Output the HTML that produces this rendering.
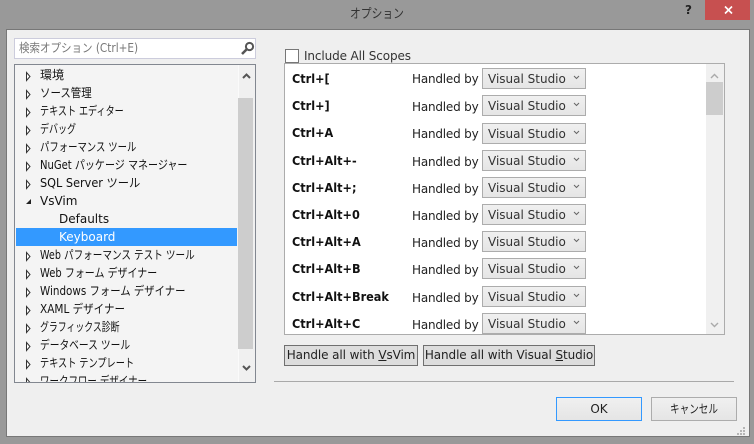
<!DOCTYPE html>
<html><head><meta charset="utf-8">
<style>
html,body{margin:0;padding:0}
body{width:754px;height:444px;overflow:hidden;position:relative;background:#999;font:12px/18px "DejaVu Sans","WenQuanYi Zen Hei","Noto Sans CJK JP",sans-serif;color:#1e1e1e}
div{position:absolute;box-sizing:border-box;white-space:nowrap}
svg{position:absolute;overflow:visible}
.t{left:0;width:221px;height:18px}
.t svg{left:10px;top:5px}
.t span{position:absolute;left:24px;top:-1px;transform-origin:0 50%;color:#111}
.k{left:7px;font-weight:bold;color:#111;font-size:12px;height:18px;line-height:18px;transform:scaleX(.94);transform-origin:0 50%}
.h{left:127px;height:18px;line-height:18px;color:#222;letter-spacing:-.2px}
.c{left:197px;width:104px;height:21px;border:1px solid #acacac;background:linear-gradient(#f0f0f0,#e5e5e5);padding-left:5px;line-height:21px;color:#333}
.c svg{left:90px;top:6px}
.b{border:1px solid #707070;background:#ddd;line-height:18px;text-align:center;color:#222;letter-spacing:-.1px}
.s{display:inline-block;transform:scaleX(.8)}
</style></head><body>
<div style="left:340px;top:6px;width:74px;text-align:center;color:#333;font-size:13px;transform:scaleX(.83)">オプション</div>
<div style="left:685px;top:1px;font-weight:bold;color:#222;font-size:12px">?</div>
<div style="left:705px;top:0;width:45px;height:20px;background:#c75050"></div>
<svg style="left:724px;top:6px" width="9" height="8"><path d="M1 .5l7 7M8 .5l-7 7" stroke="#fff" stroke-width="1.6"/></svg>
<div style="left:6px;top:29px;width:744px;height:408px;border:1px solid #777;background:#efefef"></div>

<div style="left:14px;top:38px;width:242px;height:21px;border:1px solid #ccccdc;background:#fff"></div>
<div style="left:19px;top:39px;color:#777;line-height:19px;transform:scaleX(.875);transform-origin:0 50%">検索オプション (Ctrl+E)</div>
<svg style="left:240px;top:41px" width="15" height="15"><circle cx="9.5" cy="5.5" r="3.6" fill="none" stroke="#555" stroke-width="2"/><path d="M7 8l-5 5" stroke="#555" stroke-width="2.6"/></svg>

<div style="left:14px;top:64px;width:242px;height:319px;border:1px solid #828790;background:#f4f4f4;overflow:hidden">
 <div style="left:1px;top:0;width:222px;height:317px">
  <div class="t" style="top:2px"><svg width="6" height="10"><path d="M.5 .5l3.5 4-3.5 4z" fill="#fff" stroke="#333"/></svg><span>環境</span></div>
  <div class="t" style="top:20px"><svg width="6" height="10"><path d="M.5 .5l3.5 4-3.5 4z" fill="#fff" stroke="#333"/></svg><span style="transform:scaleX(.87)">ソース管理</span></div>
  <div class="t" style="top:38px"><svg width="6" height="10"><path d="M.5 .5l3.5 4-3.5 4z" fill="#fff" stroke="#333"/></svg><span style="transform:scaleX(.757)">テキスト エディター</span></div>
  <div class="t" style="top:56px"><svg width="6" height="10"><path d="M.5 .5l3.5 4-3.5 4z" fill="#fff" stroke="#333"/></svg><span style="transform:scaleX(.75)">デバッグ</span></div>
  <div class="t" style="top:74px"><svg width="6" height="10"><path d="M.5 .5l3.5 4-3.5 4z" fill="#fff" stroke="#333"/></svg><span style="transform:scaleX(.78)">パフォーマンス ツール</span></div>
  <div class="t" style="top:92px"><svg width="6" height="10"><path d="M.5 .5l3.5 4-3.5 4z" fill="#fff" stroke="#333"/></svg><span style="transform:scaleX(.835)">NuGet パッケージ マネージャー</span></div>
  <div class="t" style="top:110px"><svg width="6" height="10"><path d="M.5 .5l3.5 4-3.5 4z" fill="#fff" stroke="#333"/></svg><span style="transform:scaleX(.94)">SQL Server ツール</span></div>
  <div class="t" style="top:128px"><svg width="6" height="10"><path d="M0 6h5v-5z" fill="#222"/></svg><span>VsVim</span></div>
  <div class="t" style="top:146px"><span style="left:43px">Defaults</span></div>
  <div class="t" style="top:163px;background:#3399ff"><span style="left:43px;top:0;color:#fff">Keyboard</span></div>
  <div class="t" style="top:182px"><svg width="6" height="10"><path d="M.5 .5l3.5 4-3.5 4z" fill="#fff" stroke="#333"/></svg><span style="transform:scaleX(.8)">Web パフォーマンス テスト ツール</span></div>
  <div class="t" style="top:200px"><svg width="6" height="10"><path d="M.5 .5l3.5 4-3.5 4z" fill="#fff" stroke="#333"/></svg><span style="transform:scaleX(.83)">Web フォーム デザイナー</span></div>
  <div class="t" style="top:218px"><svg width="6" height="10"><path d="M.5 .5l3.5 4-3.5 4z" fill="#fff" stroke="#333"/></svg><span style="transform:scaleX(.863)">Windows フォーム デザイナー</span></div>
  <div class="t" style="top:236px"><svg width="6" height="10"><path d="M.5 .5l3.5 4-3.5 4z" fill="#fff" stroke="#333"/></svg><span style="transform:scaleX(.876)">XAML デザイナー</span></div>
  <div class="t" style="top:254px"><svg width="6" height="10"><path d="M.5 .5l3.5 4-3.5 4z" fill="#fff" stroke="#333"/></svg><span style="transform:scaleX(.74)">グラフィックス診断</span></div>
  <div class="t" style="top:272px"><svg width="6" height="10"><path d="M.5 .5l3.5 4-3.5 4z" fill="#fff" stroke="#333"/></svg><span style="transform:scaleX(.81)">データベース ツール</span></div>
  <div class="t" style="top:290px"><svg width="6" height="10"><path d="M.5 .5l3.5 4-3.5 4z" fill="#fff" stroke="#333"/></svg><span style="transform:scaleX(.764)">テキスト テンプレート</span></div>
  <div class="t" style="top:308px"><svg width="6" height="10"><path d="M.5 .5l3.5 4-3.5 4z" fill="#fff" stroke="#333"/></svg><span style="transform:scaleX(.79)">ワークフロー デザイナー</span></div>
 </div>
 <div style="left:223px;top:0;width:18px;height:317px;background:#f0f0f0;border-left:1px solid #fafafa"></div>
 <div style="left:223px;top:33px;width:15px;height:251px;background:#cdcdcd"></div>
 <svg style="left:227px;top:8px" width="9" height="6"><path d="M1 5l3.5-3.5L8 5" fill="none" stroke="#555" stroke-width="2"/></svg>
 <svg style="left:227px;top:300px" width="9" height="6"><path d="M1 1l3.5 3.5L8 1" fill="none" stroke="#555" stroke-width="2"/></svg>
</div>

<div style="left:285px;top:49px;width:14px;height:14px;border:1px solid #777;background:#fff"></div>
<div style="left:304px;top:47px;color:#333;letter-spacing:-.12px">Include All Scopes</div>

<div style="left:284px;top:63px;width:441px;height:272px;border:1px solid #acacac;background:#fff;overflow:hidden">
 <div class="k" style="top:6px">Ctrl+[</div><div class="h" style="top:6px">Handled by</div><div class="c" style="top:4px">Visual Studio<svg width="7" height="5"><path d="M1 1l2.5 2.5L6 1" fill="none" stroke="#666"/></svg></div>
 <div class="k" style="top:33px">Ctrl+]</div><div class="h" style="top:34px">Handled by</div><div class="c" style="top:31px">Visual Studio<svg width="7" height="5"><path d="M1 1l2.5 2.5L6 1" fill="none" stroke="#666"/></svg></div>
 <div class="k" style="top:60px">Ctrl+A</div><div class="h" style="top:61px">Handled by</div><div class="c" style="top:59px">Visual Studio<svg width="7" height="5"><path d="M1 1l2.5 2.5L6 1" fill="none" stroke="#666"/></svg></div>
 <div class="k" style="top:88px">Ctrl+Alt+-</div><div class="h" style="top:89px">Handled by</div><div class="c" style="top:86px">Visual Studio<svg width="7" height="5"><path d="M1 1l2.5 2.5L6 1" fill="none" stroke="#666"/></svg></div>
 <div class="k" style="top:115px">Ctrl+Alt+;</div><div class="h" style="top:116px">Handled by</div><div class="c" style="top:113px">Visual Studio<svg width="7" height="5"><path d="M1 1l2.5 2.5L6 1" fill="none" stroke="#666"/></svg></div>
 <div class="k" style="top:142px">Ctrl+Alt+0</div><div class="h" style="top:143px">Handled by</div><div class="c" style="top:140px">Visual Studio<svg width="7" height="5"><path d="M1 1l2.5 2.5L6 1" fill="none" stroke="#666"/></svg></div>
 <div class="k" style="top:169px">Ctrl+Alt+A</div><div class="h" style="top:170px">Handled by</div><div class="c" style="top:167px">Visual Studio<svg width="7" height="5"><path d="M1 1l2.5 2.5L6 1" fill="none" stroke="#666"/></svg></div>
 <div class="k" style="top:196px">Ctrl+Alt+B</div><div class="h" style="top:197px">Handled by</div><div class="c" style="top:194px">Visual Studio<svg width="7" height="5"><path d="M1 1l2.5 2.5L6 1" fill="none" stroke="#666"/></svg></div>
 <div class="k" style="top:224px">Ctrl+Alt+Break</div><div class="h" style="top:225px">Handled by</div><div class="c" style="top:222px">Visual Studio<svg width="7" height="5"><path d="M1 1l2.5 2.5L6 1" fill="none" stroke="#666"/></svg></div>
 <div class="k" style="top:251px">Ctrl+Alt+C</div><div class="h" style="top:252px">Handled by</div><div class="c" style="top:249px">Visual Studio<svg width="7" height="5"><path d="M1 1l2.5 2.5L6 1" fill="none" stroke="#666"/></svg></div>
 <div style="left:421px;top:0;width:18px;height:270px;background:#f0f0f0"></div>
 <div style="left:421px;top:18px;width:17px;height:33px;background:#cdcdcd"></div>
 <svg style="left:425px;top:9px" width="9" height="6"><path d="M1 5l3.5-3.5L8 5" fill="none" stroke="#aaa" stroke-width="1.4"/></svg>
 <svg style="left:425px;top:258px" width="9" height="6"><path d="M1 1l3.5 3.5L8 1" fill="none" stroke="#aaa" stroke-width="1.4"/></svg>
</div>

<div class="b" style="left:284px;top:345px;width:134px;height:21px">Handle all with <u>V</u>sVim</div>
<div class="b" style="left:423px;top:345px;width:172px;height:21px">Handle all with Visual <u>S</u>tudio</div>
<div style="left:274px;top:381px;width:460px;height:1px;background:#a9a9a9"></div>
<div style="left:556px;top:397px;width:86px;height:24px;border:1px solid #3399ff;background:linear-gradient(#f0f0f0,#e5e5e5);text-align:center;line-height:22px;color:#222">OK</div>
<div style="left:651px;top:397px;width:86px;height:24px;border:1px solid #acacac;background:linear-gradient(#f0f0f0,#e5e5e5);text-align:center;line-height:22px;color:#222"><span class="s">キャンセル</span></div>
<svg style="left:737px;top:427px" width="10" height="8" fill="#b5b5b5"><rect x="6" y="0" width="2" height="2"/><rect x="3" y="3" width="2" height="2"/><rect x="6" y="3" width="2" height="2"/><rect x="0" y="6" width="2" height="2"/><rect x="3" y="6" width="2" height="2"/><rect x="6" y="6" width="2" height="2"/></svg>
</body></html>
